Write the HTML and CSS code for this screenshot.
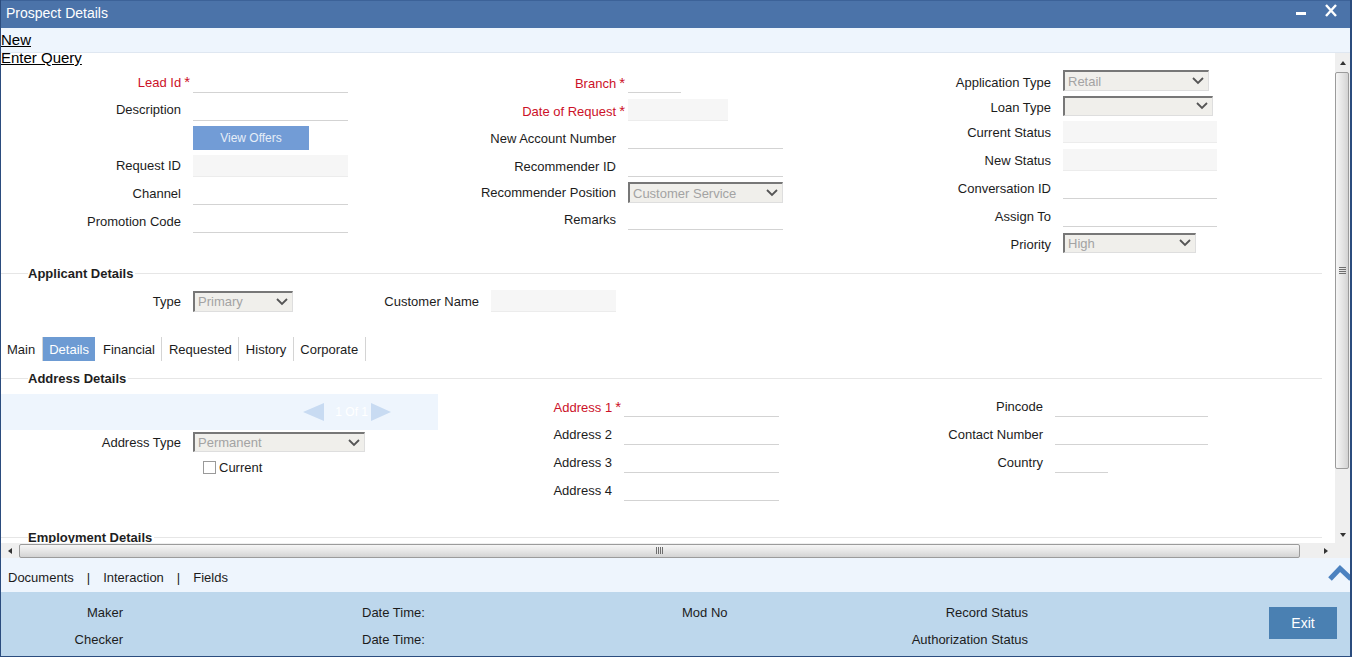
FILE: index.html
```html
<!DOCTYPE html>
<html>
<head>
<meta charset="utf-8">
<link rel="stylesheet" href="styles.css">
</head>
<body>
<div class="win">
  <div class="titlebar">
    <span class="title">Prospect Details</span>
    <div class="wctl">
      <svg class="wmin" width="10" height="28" viewBox="0 0 10 28"><rect x="0" y="12" width="10" height="3" fill="#fff"/></svg>
      <svg class="wclose" width="12" height="28" viewBox="0 0 12 28"><path d="M1 5 L11 16 M11 5 L1 16" stroke="#fff" stroke-width="2.4" fill="none"/></svg>
    </div>
  </div>
  <div class="toolbar">
    <a class="tlink">New</a>
    <a class="tlink">Enter Query</a>
  </div>
  <div class="content">
    <div class="pane">
      <div class="topform">
        <div class="col c1">
          <div class="row"><span class="lbl req">Lead Id</span><div class="inp w155"></div></div>
          <div class="row"><span class="lbl">Description</span><div class="inp w155"></div></div>
          <div class="row"><span class="lbl"></span><div class="btn">View Offers</div></div>
          <div class="row"><span class="lbl">Request ID</span><div class="inp dis w155"></div></div>
          <div class="row"><span class="lbl">Channel</span><div class="inp w155"></div></div>
          <div class="row"><span class="lbl">Promotion Code</span><div class="inp w155"></div></div>
        </div>
        <div class="col c2">
          <div class="row"><span class="lbl req">Branch</span><div class="inp w53"></div></div>
          <div class="row"><span class="lbl req">Date of Request</span><div class="inp dis w100"></div></div>
          <div class="row"><span class="lbl">New Account Number</span><div class="inp w155"></div></div>
          <div class="row"><span class="lbl">Recommender ID</span><div class="inp w155"></div></div>
          <div class="row s"><span class="lbl">Recommender Position</span><div class="sel w157"><span>Customer Service</span><svg width="12" height="8" viewBox="0 0 12 8"><polyline points="1,1 6,6 11,1" fill="none" stroke="#555" stroke-width="1.8"/></svg></div></div>
          <div class="row"><span class="lbl">Remarks</span><div class="inp w155"></div></div>
        </div>
        <div class="col c3">
          <div class="row s"><span class="lbl">Application Type</span><div class="sel w146"><span>Retail</span><svg width="12" height="8" viewBox="0 0 12 8"><polyline points="1,1 6,6 11,1" fill="none" stroke="#555" stroke-width="1.8"/></svg></div></div>
          <div class="row s"><span class="lbl">Loan Type</span><div class="sel w150 h20"><span></span><svg width="12" height="8" viewBox="0 0 12 8"><polyline points="1,1 6,6 11,1" fill="none" stroke="#555" stroke-width="1.8"/></svg></div></div>
          <div class="row"><span class="lbl">Current Status</span><div class="inp dis w154"></div></div>
          <div class="row"><span class="lbl">New Status</span><div class="inp dis w154"></div></div>
          <div class="row"><span class="lbl">Conversation ID</span><div class="inp w154"></div></div>
          <div class="row"><span class="lbl">Assign To</span><div class="inp w154"></div></div>
          <div class="row s"><span class="lbl">Priority</span><div class="sel w133 h20"><span>High</span><svg width="12" height="8" viewBox="0 0 12 8"><polyline points="1,1 6,6 11,1" fill="none" stroke="#555" stroke-width="1.8"/></svg></div></div>
        </div>
      </div>

      <div class="legend lg-app">Applicant Details</div>
      <div class="approw">
        <span class="lbl l180">Type</span>
        <div class="sel w100"><span>Primary</span><svg width="12" height="8" viewBox="0 0 12 8"><polyline points="1,1 6,6 11,1" fill="none" stroke="#555" stroke-width="1.8"/></svg></div>
        <span class="lbl l186">Customer Name</span>
        <div class="inp dis w125"></div>
      </div>

      <div class="tabs">
        <div class="tab first">Main</div>
        <div class="tab on">Details</div>
        <div class="tab">Financial</div>
        <div class="tab">Requested</div>
        <div class="tab">History</div>
        <div class="tab">Corporate</div>
      </div>

      <div class="legend lg-addr">Address Details</div>
      <div class="addr">
        <div class="acol a1">
          <div class="pager">
            <span class="tri-l"></span>
            <span class="ptext">1 Of 1</span>
            <span class="tri-r"></span>
          </div>
          <div class="arow"><span class="lbl l180">Address Type</span><div class="sel w172 h20"><span>Permanent</span><svg width="12" height="8" viewBox="0 0 12 8"><polyline points="1,1 6,6 11,1" fill="none" stroke="#555" stroke-width="1.8"/></svg></div></div>
          <div class="arow chkrow"><span class="chk"></span><span>Current</span></div>
        </div>
        <div class="acol a2">
          <div class="row"><span class="lbl req">Address 1</span><div class="inp w155"></div></div>
          <div class="row"><span class="lbl">Address 2</span><div class="inp w155"></div></div>
          <div class="row"><span class="lbl">Address 3</span><div class="inp w155"></div></div>
          <div class="row"><span class="lbl">Address 4</span><div class="inp w155"></div></div>
        </div>
        <div class="acol a3">
          <div class="row"><span class="lbl">Pincode</span><div class="inp w153"></div></div>
          <div class="row"><span class="lbl">Contact Number</span><div class="inp w153"></div></div>
          <div class="row"><span class="lbl">Country</span><div class="inp w53"></div></div>
        </div>
      </div>

      <div class="legend lg-emp">Employment Details</div>
    </div>

    <div class="vscroll">
      <div class="varea"><span class="t-up"></span></div>
      <div class="vthumb"><span class="grip-v"></span></div>
      <div class="vspace"></div>
      <div class="varea"><span class="t-down"></span></div>
    </div>
    <div class="hscroll">
      <div class="harea hleft"><span class="t-left"></span></div>
      <div class="hthumb"><span class="grip-h"></span></div>
      <div class="hspace"></div>
      <div class="harea hright"><span class="t-right"></span></div>
    </div>
    <div class="corner"></div>
  </div>

  <div class="links">
    <span>Documents</span><span>|</span><span>Interaction</span><span>|</span><span>Fields</span>
    <svg class="chev" width="22" height="18" viewBox="0 0 22 18"><polyline points="2,15 12,4.5 23,15" fill="none" stroke="#4c82c0" stroke-width="5"/></svg>
  </div>

  <div class="audit">
    <span class="au c1r1 right">Maker</span>
    <span class="au c3r1">Date Time:</span>
    <span class="au c4r1">Mod No</span>
    <span class="au c5r1 right">Record Status</span>
    <span class="au c1r2 right">Checker</span>
    <span class="au c3r2">Date Time:</span>
    <span class="au c5r2 right">Authorization Status</span>
    <div class="exit">Exit</div>
  </div>
</div>
</body>
</html>
```
FILE: styles.css
```css
body {
  margin: 0;
  font-family: "Liberation Sans", Arial, sans-serif;
  font-size: 13px;
  color: #1c1c1c;
}

.win {
  width: 1349px;
  height: 656px;
  border-left: 1px solid #2b4c7e;
  border-right: 2px solid #2b4c7e;
  border-bottom: 1px solid #2b4c7e;
  background: #fff;
  overflow: hidden;
}

/* title bar */
.titlebar {
  height: 28px;
  box-sizing: border-box;
  background: #4b73a9;
  border-top: 1px solid #3c6298;
  display: flex;
  justify-content: space-between;
  align-items: center;
  padding: 0 13px 3px 5px;
  color: #fff;
  font-size: 14px;
}
.wctl {
  display: flex;
  gap: 19px;
  height: 28px;
  margin-top: 2px;
}
.wctl svg { display: block; }

/* toolbar */
.toolbar {
  position: relative;
  z-index: 1;
  height: 25px;
  box-sizing: border-box;
  background: #eef5fd;
  border-bottom: 1px solid #dfe7f1;
  padding-top: 3px;
  font-size: 15px;
  line-height: 18px;
}
.tlink {
  display: block;
  width: max-content;
  color: #000;
  text-decoration: underline;
}

/* content */
.content {
  height: 505px;
  display: grid;
  grid-template-columns: 1334px 15px;
  grid-template-rows: 490px 15px;
}
.pane {
  overflow: hidden;
  padding-top: 15px;
  box-sizing: border-box;
}

.topform {
  display: flex;
  height: 187px;
}
.col {
  display: flex;
  flex-direction: column;
}
.c1 { width: 347px; }
.c2 { width: 435px; }
.c3 { flex: 1; }

.row {
  display: flex;
  align-items: center;
  height: 28px;
  flex-shrink: 0;
}
.row.s { height: 25px; }
.c3 .row.s .lbl { padding-top: 3px; }
.c1 .lbl { margin-top: -2px; }

.lbl {
  text-align: right;
  margin-right: 12px;
  flex-shrink: 0;
  white-space: nowrap;
}
.c1 .lbl, .l180 { width: 180px; }
.c2 .lbl, .c3 .lbl { width: 268px; }
.l186 { width: 186px; }
.a2 .lbl { width: 174px; }
.a3 .lbl { width: 264px; }

.req { color: #cc1128; }
.req::after {
  content: "*";
  color: #cc1128;
  font-size: 15px;
  margin-left: 3px;
  margin-right: -9px;
}

.inp {
  height: 22px;
  box-sizing: border-box;
  border-bottom: 1px solid #d3d3d3;
}
.inp.dis {
  background: #f6f6f6;
  border-bottom-color: #ececec;
}

.w53 { width: 53px; }
.w100 { width: 100px; }
.w125 { width: 125px; }
.w133 { width: 133px; }
.w146 { width: 146px; }
.w150 { width: 150px; }
.w153 { width: 153px; }
.w154 { width: 154px; }
.w155 { width: 155px; }
.w157 { width: 157px; }
.w172 { width: 172px; }

.sel {
  height: 21px;
  box-sizing: border-box;
  border-top: 2px solid #777;
  border-left: 2px solid #777;
  border-right: 1px solid #dedede;
  border-bottom: 1px solid #dedede;
  background: #f0efeb;
  color: #a3a3a3;
  display: flex;
  align-items: center;
  justify-content: space-between;
  padding: 0 4px 0 3px;
  white-space: nowrap;
}
.sel.h20 { height: 20px; }
.sel svg { display: block; flex-shrink: 0; }

.btn {
  width: 116px;
  height: 24px;
  background: #729cd6;
  color: #e6eef8;
  font-size: 12px;
  display: flex;
  align-items: center;
  justify-content: center;
}

/* legends */
.legend {
  display: flex;
  align-items: center;
  height: 16px;
  margin-right: 13px;
  font-weight: bold;
  color: #1e1e1e;
  white-space: nowrap;
}
.legend::before {
  content: "";
  width: 27px;
  border-top: 1px solid #e6e6e6;
}
.legend::after {
  content: "";
  flex: 1;
  border-top: 1px solid #e6e6e6;
  margin-left: 2px;
}
.lg-app { margin-top: 10px; }
.lg-addr { margin-top: 9px; }
.lg-emp { margin-top: 25px; }

.approw {
  display: flex;
  align-items: center;
  height: 24px;
  margin-top: 8px;
}

/* tabs */
.tabs {
  display: flex;
  height: 24px;
  margin-top: 24px;
}
.tab {
  display: flex;
  align-items: center;
  padding: 0 6.5px;
  border-right: 1px solid #d4d4d4;
}
.tab.first { padding-left: 6px; }
.tab.on {
  background: #6d9bd3;
  color: #fff;
  border-right-color: #fff;
}

/* address */
.addr {
  display: flex;
  margin-top: 6px;
  height: 112px;
}
.a1 { width: 437px; }
.a2 { width: 341px; }
.acol { display: flex; flex-direction: column; }

.pager {
  margin-top: 2px;
  height: 36px;
  background: #eef5fd;
  display: flex;
  align-items: center;
  justify-content: flex-end;
  padding-right: 47px;
}
.tri-l {
  width: 0; height: 0;
  border-top: 9px solid transparent;
  border-bottom: 9px solid transparent;
  border-right: 21px solid #c8dbf2;
  margin-right: 11px;
}
.tri-r {
  width: 0; height: 0;
  border-top: 9px solid transparent;
  border-bottom: 9px solid transparent;
  border-left: 20px solid #c8dbf2;
  margin-left: 3px;
}
.ptext {
  color: #fff;
  font-size: 12px;
}

.arow {
  display: flex;
  align-items: center;
  height: 24px;
}
.chkrow {
  margin-top: 1px;
  padding-left: 202px;
}
.chk {
  width: 13px;
  height: 13px;
  box-sizing: border-box;
  border: 1px solid #9a9a9a;
  background: #fff;
  margin-right: 3px;
}

/* scrollbars */
.vscroll {
  background: #efefef;
  display: flex;
  flex-direction: column;
}
.varea {
  height: 19px;
  display: flex;
  align-items: center;
  justify-content: center;
  flex-shrink: 0;
}
.varea:last-child { height: 17px; }
.t-up {
  width: 0; height: 0;
  border-left: 3.5px solid transparent;
  border-right: 3.5px solid transparent;
  border-bottom: 4px solid #333;
}
.t-down {
  width: 0; height: 0;
  border-left: 3.5px solid transparent;
  border-right: 3.5px solid transparent;
  border-top: 4px solid #333;
}
.vthumb {
  width: 14px;
  height: 397px;
  box-sizing: border-box;
  border: 1px solid #9b9b9b;
  border-radius: 2px;
  background: linear-gradient(to right, #f6f6f6, #e4e4e4 55%, #d3d3d3);
  display: flex;
  align-items: center;
  justify-content: center;
  flex-shrink: 0;
}
.grip-v {
  width: 7px;
  height: 7px;
  background: repeating-linear-gradient(to bottom, #6e6e6e 0 1px, transparent 1px 2px);
}
.vspace { flex: 1; }

.hscroll {
  background: #efefef;
  display: flex;
  align-items: center;
}
.harea {
  height: 15px;
  display: flex;
  align-items: center;
  justify-content: center;
  flex-shrink: 0;
}
.hleft { width: 18px; }
.hright { width: 19px; }
.t-left {
  width: 0; height: 0;
  border-top: 3.5px solid transparent;
  border-bottom: 3.5px solid transparent;
  border-right: 4px solid #333;
}
.t-right {
  width: 0; height: 0;
  border-top: 3.5px solid transparent;
  border-bottom: 3.5px solid transparent;
  border-left: 4px solid #333;
}
.hthumb {
  width: 1281px;
  height: 14px;
  box-sizing: border-box;
  border: 1px solid #9b9b9b;
  border-radius: 2px;
  background: linear-gradient(to bottom, #f6f6f6, #e4e4e4 55%, #d3d3d3);
  display: flex;
  align-items: center;
  justify-content: center;
  flex-shrink: 0;
}
.grip-h {
  width: 7px;
  height: 7px;
  background: repeating-linear-gradient(to right, #6e6e6e 0 1px, transparent 1px 2px);
}
.hspace { flex: 1; }
.corner { background: #efefef; }

/* links bar */
.links {
  height: 34px;
  box-sizing: border-box;
  background: #eef5fd;
  display: flex;
  align-items: center;
  gap: 13px;
  padding: 4px 0 0 7px;
  color: #1c1c1c;
}
.chev {
  display: block;
  margin-left: auto;
  align-self: flex-start;
  margin-top: 2px;
  overflow: visible;
}

/* audit */
.audit {
  height: 64px;
  box-sizing: border-box;
  background: #bdd7ec;
  display: grid;
  grid-template-columns: 122px 239px 320px 178px 168px 241px 68px;
  grid-template-rows: 24px 24px;
  row-gap: 3px;
  padding-top: 8px;
  align-items: center;
}
.au { white-space: nowrap; }
.right { text-align: right; }
.c1r1 { grid-column: 1; grid-row: 1; }
.c3r1 { grid-column: 3; grid-row: 1; }
.c4r1 { grid-column: 4; grid-row: 1; }
.c5r1 { grid-column: 5; grid-row: 1; }
.c1r2 { grid-column: 1; grid-row: 2; }
.c3r2 { grid-column: 3; grid-row: 2; }
.c5r2 { grid-column: 5; grid-row: 2; }
.exit {
  grid-column: 7;
  grid-row: 1 / 3;
  align-self: start;
  margin-top: 7px;
  height: 32px;
  background: #4a80b2;
  color: #fff;
  font-size: 14px;
  display: flex;
  align-items: center;
  justify-content: center;
}
```
